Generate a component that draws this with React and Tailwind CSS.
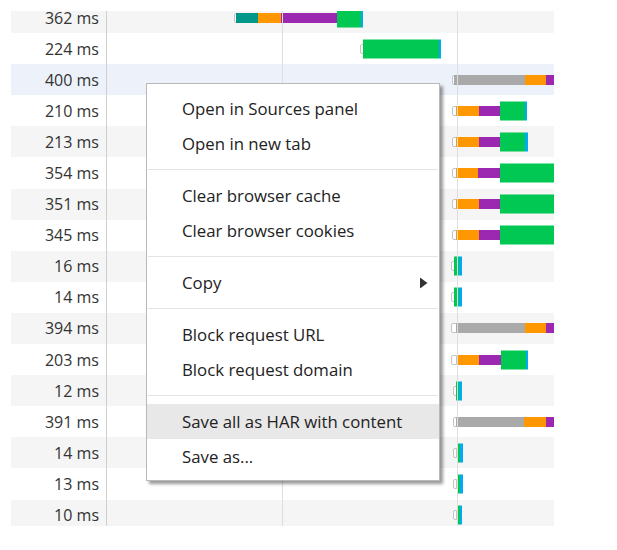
import React from 'react';

// waterfall segments, x in page pixels: [start, end, kind]
const rows = [
  { ms: '362 ms', segs: [[235, 238, 'stub'], [237, 259, 'teal'], [259, 282, 'orange'], [282, 338, 'purple'], [338, 362, 'green'], [362, 364, 'blue']] },
  { ms: '224 ms', segs: [[361, 365, 'stub'], [364, 440, 'green'], [440, 442, 'blue']] },
  { ms: '400 ms', selected: true, segs: [[453, 457, 'stub'], [455, 526, 'gray'], [526, 547, 'orange'], [547, 560, 'purple']] },
  { ms: '210 ms', segs: [[453, 458, 'stub'], [457, 480, 'orange'], [480, 501, 'purple'], [501, 526, 'green'], [526, 528, 'blue']] },
  { ms: '213 ms', segs: [[453, 458, 'stub'], [457, 480, 'orange'], [480, 501, 'purple'], [501, 526, 'green'], [526, 529, 'blue']] },
  { ms: '354 ms', segs: [[453, 458, 'stub'], [457, 479, 'orange'], [479, 501, 'purple'], [501, 560, 'green']] },
  { ms: '351 ms', segs: [[453, 458, 'stub'], [457, 480, 'orange'], [480, 501, 'purple'], [501, 560, 'green']] },
  { ms: '345 ms', segs: [[453, 458, 'stub'], [457, 480, 'orange'], [480, 501, 'purple'], [501, 560, 'green']] },
  { ms: '16 ms', segs: [[452, 456, 'stub'], [455, 460, 'green'], [460, 463, 'blue']] },
  { ms: '14 ms', segs: [[452, 456, 'stub'], [455, 460, 'green'], [460, 463, 'blue']] },
  { ms: '394 ms', segs: [[452, 458, 'stub'], [457, 526, 'gray'], [526, 547, 'orange'], [547, 560, 'purple']] },
  { ms: '203 ms', segs: [[452, 458, 'stub'], [458, 480, 'orange'], [480, 502, 'purple'], [502, 527, 'green'], [527, 529, 'blue']] },
  { ms: '12 ms', segs: [[454, 458, 'stub'], [457, 460, 'green'], [460, 463, 'blue']] },
  { ms: '391 ms', segs: [[454, 458, 'stub'], [457, 525, 'gray'], [525, 547, 'orange'], [547, 560, 'purple']] },
  { ms: '14 ms', segs: [[454, 458, 'stub'], [458, 461, 'green'], [461, 464, 'blue']] },
  { ms: '13 ms', segs: [[454, 458, 'stub'], [458, 461, 'green'], [461, 464, 'blue']] },
  { ms: '10 ms', segs: [[454, 458, 'stub'], [458, 461, 'green'], [461, 463, 'blue']] },
];

const segClass = {
  stub: 'h-[10px] bg-white border border-[#c4c4c4] rounded-l-[2px]',
  teal: 'h-[10px] bg-[#009688]',
  orange: 'h-[10px] bg-[#ff9800]',
  purple: 'h-[10px] bg-[#9c27b0]',
  gray: 'h-[10px] bg-[#a9a9a9]',
  green: 'h-[19px] bg-[#00c853]',
  blue: 'h-[19px] bg-[#03a9f4]',
};

const WATERFALL_X = 108;

function Row({ row, index }) {
  const bg = row.selected ? 'bg-[#edf2fa]' : index % 2 === 0 ? 'bg-[#f5f5f5]' : 'bg-white';
  return (
    <div className={`flex h-[31.1px] ${bg}`}>
      <div className="w-[96px] shrink-0 flex items-center justify-end pr-[7px] text-[#333] border-r border-[#cfcfcf]">
        {row.ms}
      </div>
      <div className="relative flex-1">
        {row.segs.map(([a, b, kind], i) => (
          <div
            key={i}
            className={`absolute top-1/2 -translate-y-1/2 ${segClass[kind]}`}
            style={{ left: a - WATERFALL_X, width: b - a }}
          />
        ))}
      </div>
    </div>
  );
}

function MenuItem({ children, active, arrow }) {
  return (
    <div className={`relative flex items-center h-[35px] pl-[35px] text-[#222] ${active ? 'bg-[#e8e8e8]' : ''}`}>
      {children}
      {arrow && (
        <svg className="absolute right-[11px] top-1/2 -translate-y-1/2" width="8" height="11" viewBox="0 0 8 11">
          <path d="M0 0 L7.5 5.5 L0 11 Z" fill="#333" />
        </svg>
      )}
    </div>
  );
}

function Separator() {
  return <div className="h-px bg-[#e3e3e3] my-[8px] mx-px" />;
}

export default function App() {
  return (
    <div
      className="relative w-[617px] h-[550px] bg-white overflow-hidden text-[16px]"
      style={{ fontFamily: '"Open Sans", "Noto Sans", sans-serif' }}
    >
      {/* request table */}
      <div className="relative ml-[11px] mt-[11px] w-[543px] h-[515px] overflow-hidden">
        <div className="-mt-[9px]">
          {rows.map((row, i) => (
            <Row key={i} row={row} index={i} />
          ))}
        </div>
        {/* waterfall grid lines */}
        <div className="absolute top-0 bottom-0 left-[271px] w-px bg-[#dedede]" />
        <div className="absolute top-0 bottom-0 left-[446px] w-px bg-[#dedede]" />
      </div>

      {/* context menu */}
      <div className="absolute left-[146px] top-[83px] w-[294px] bg-white border border-[#b9b9b9] pt-[7px] pb-[6px] text-[16.8px] shadow-[3px_3px_3px_rgba(0,0,0,0.4)]">
        <MenuItem>Open in Sources panel</MenuItem>
        <MenuItem>Open in new tab</MenuItem>
        <Separator />
        <MenuItem>Clear browser cache</MenuItem>
        <MenuItem>Clear browser cookies</MenuItem>
        <Separator />
        <MenuItem arrow>Copy</MenuItem>
        <Separator />
        <MenuItem>Block request URL</MenuItem>
        <MenuItem>Block request domain</MenuItem>
        <Separator />
        <MenuItem active>Save all as HAR with content</MenuItem>
        <MenuItem>Save as...</MenuItem>
      </div>
    </div>
  );
}
